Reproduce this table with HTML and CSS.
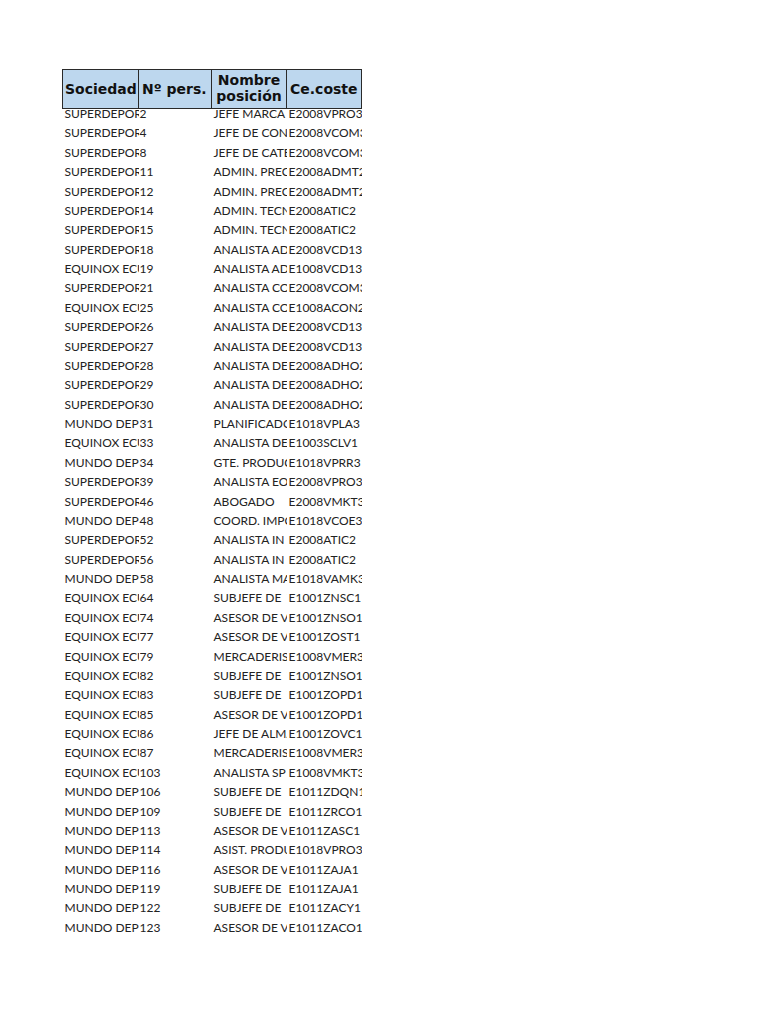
FILE: index.html
```html
<!DOCTYPE html>
<html lang="es">
<head>
<meta charset="utf-8">
<title>Sociedad</title>
<link rel="stylesheet" href="styles.css">
</head>
<body>
<table class="sheet">
<colgroup><col class="c1"><col class="c2"><col class="c3"><col class="c4"></colgroup>
<thead>
<tr class="head">
<th class="h1">Sociedad</th><th class="h2">Nº pers.</th><th class="h3">Nombre<br>posición</th><th class="h4">Ce.coste</th>
</tr>
</thead>
<tbody>
<tr><td class="d1">SUPERDEPORTE</td><td class="d2">2</td><td class="d3">JEFE MARCA</td><td class="d4">E2008VPRO3</td></tr>
<tr><td class="d1">SUPERDEPORTE</td><td class="d2">4</td><td class="d3">JEFE DE CONTABILIDAD</td><td class="d4">E2008VCOM3</td></tr>
<tr><td class="d1">SUPERDEPORTE</td><td class="d2">8</td><td class="d3">JEFE DE CATEGORIA</td><td class="d4">E2008VCOM3</td></tr>
<tr><td class="d1">SUPERDEPORTE</td><td class="d2">11</td><td class="d3">ADMIN. PRECIOS</td><td class="d4">E2008ADMT2</td></tr>
<tr><td class="d1">SUPERDEPORTE</td><td class="d2">12</td><td class="d3">ADMIN. PRECIOS</td><td class="d4">E2008ADMT2</td></tr>
<tr><td class="d1">SUPERDEPORTE</td><td class="d2">14</td><td class="d3">ADMIN. TECNOLOGIA</td><td class="d4">E2008ATIC2</td></tr>
<tr><td class="d1">SUPERDEPORTE</td><td class="d2">15</td><td class="d3">ADMIN. TECNOLOGIA</td><td class="d4">E2008ATIC2</td></tr>
<tr><td class="d1">SUPERDEPORTE</td><td class="d2">18</td><td class="d3">ANALISTA ADM</td><td class="d4">E2008VCD13</td></tr>
<tr><td class="d1">EQUINOX ECUADOR</td><td class="d2">19</td><td class="d3">ANALISTA ADM</td><td class="d4">E1008VCD13</td></tr>
<tr><td class="d1">SUPERDEPORTE</td><td class="d2">21</td><td class="d3">ANALISTA COMERCIAL</td><td class="d4">E2008VCOM3</td></tr>
<tr><td class="d1">EQUINOX ECUADOR</td><td class="d2">25</td><td class="d3">ANALISTA CONTABLE</td><td class="d4">E1008ACON2</td></tr>
<tr><td class="d1">SUPERDEPORTE</td><td class="d2">26</td><td class="d3">ANALISTA DE PRECIOS</td><td class="d4">E2008VCD13</td></tr>
<tr><td class="d1">SUPERDEPORTE</td><td class="d2">27</td><td class="d3">ANALISTA DE PRECIOS</td><td class="d4">E2008VCD13</td></tr>
<tr><td class="d1">SUPERDEPORTE</td><td class="d2">28</td><td class="d3">ANALISTA DE PERSONAL</td><td class="d4">E2008ADHO2</td></tr>
<tr><td class="d1">SUPERDEPORTE</td><td class="d2">29</td><td class="d3">ANALISTA DE PERSONAL</td><td class="d4">E2008ADHO2</td></tr>
<tr><td class="d1">SUPERDEPORTE</td><td class="d2">30</td><td class="d3">ANALISTA DE PERSONAL</td><td class="d4">E2008ADHO2</td></tr>
<tr><td class="d1">MUNDO DEP</td><td class="d2">31</td><td class="d3">PLANIFICADOR</td><td class="d4">E1018VPLA3</td></tr>
<tr><td class="d1">EQUINOX ECUADOR</td><td class="d2">33</td><td class="d3">ANALISTA DE CREDITO</td><td class="d4">E1003SCLV1</td></tr>
<tr><td class="d1">MUNDO DEP</td><td class="d2">34</td><td class="d3">GTE. PRODUCTO</td><td class="d4">E1018VPRR3</td></tr>
<tr><td class="d1">SUPERDEPORTE</td><td class="d2">39</td><td class="d3">ANALISTA EOQ</td><td class="d4">E2008VPRO3</td></tr>
<tr><td class="d1">SUPERDEPORTE</td><td class="d2">46</td><td class="d3">ABOGADO</td><td class="d4">E2008VMKT3</td></tr>
<tr><td class="d1">MUNDO DEP</td><td class="d2">48</td><td class="d3">COORD. IMPORTACIONES</td><td class="d4">E1018VCOE3</td></tr>
<tr><td class="d1">SUPERDEPORTE</td><td class="d2">52</td><td class="d3">ANALISTA IN FRA</td><td class="d4">E2008ATIC2</td></tr>
<tr><td class="d1">SUPERDEPORTE</td><td class="d2">56</td><td class="d3">ANALISTA IN FRA</td><td class="d4">E2008ATIC2</td></tr>
<tr><td class="d1">MUNDO DEP</td><td class="d2">58</td><td class="d3">ANALISTA MARKETING</td><td class="d4">E1018VAMK3</td></tr>
<tr><td class="d1">EQUINOX ECUADOR</td><td class="d2">64</td><td class="d3">SUBJEFE DE  TIENDA</td><td class="d4">E1001ZNSC1</td></tr>
<tr><td class="d1">EQUINOX ECUADOR</td><td class="d2">74</td><td class="d3">ASESOR DE VENTAS</td><td class="d4">E1001ZNSO1</td></tr>
<tr><td class="d1">EQUINOX ECUADOR</td><td class="d2">77</td><td class="d3">ASESOR DE VENTAS</td><td class="d4">E1001ZOST1</td></tr>
<tr><td class="d1">EQUINOX ECUADOR</td><td class="d2">79</td><td class="d3">MERCADERISTA</td><td class="d4">E1008VMER3</td></tr>
<tr><td class="d1">EQUINOX ECUADOR</td><td class="d2">82</td><td class="d3">SUBJEFE DE  TIENDA</td><td class="d4">E1001ZNSO1</td></tr>
<tr><td class="d1">EQUINOX ECUADOR</td><td class="d2">83</td><td class="d3">SUBJEFE DE  TIENDA</td><td class="d4">E1001ZOPD1</td></tr>
<tr><td class="d1">EQUINOX ECUADOR</td><td class="d2">85</td><td class="d3">ASESOR DE VENTAS</td><td class="d4">E1001ZOPD1</td></tr>
<tr><td class="d1">EQUINOX ECUADOR</td><td class="d2">86</td><td class="d3">JEFE DE ALMACEN</td><td class="d4">E1001ZOVC1</td></tr>
<tr><td class="d1">EQUINOX ECUADOR</td><td class="d2">87</td><td class="d3">MERCADERISTA</td><td class="d4">E1008VMER3</td></tr>
<tr><td class="d1">EQUINOX ECUADOR</td><td class="d2">103</td><td class="d3">ANALISTA SP  MKT</td><td class="d4">E1008VMKT3</td></tr>
<tr><td class="d1">MUNDO DEP</td><td class="d2">106</td><td class="d3">SUBJEFE DE  TIENDA</td><td class="d4">E1011ZDQN1</td></tr>
<tr><td class="d1">MUNDO DEP</td><td class="d2">109</td><td class="d3">SUBJEFE DE  TIENDA</td><td class="d4">E1011ZRCO1</td></tr>
<tr><td class="d1">MUNDO DEP</td><td class="d2">113</td><td class="d3">ASESOR DE VENTAS</td><td class="d4">E1011ZASC1</td></tr>
<tr><td class="d1">MUNDO DEP</td><td class="d2">114</td><td class="d3">ASIST. PRODUCTO</td><td class="d4">E1018VPRO3</td></tr>
<tr><td class="d1">MUNDO DEP</td><td class="d2">116</td><td class="d3">ASESOR DE VENTAS</td><td class="d4">E1011ZAJA1</td></tr>
<tr><td class="d1">MUNDO DEP</td><td class="d2">119</td><td class="d3">SUBJEFE DE  TIENDA</td><td class="d4">E1011ZAJA1</td></tr>
<tr><td class="d1">MUNDO DEP</td><td class="d2">122</td><td class="d3">SUBJEFE DE  TIENDA</td><td class="d4">E1011ZACY1</td></tr>
<tr><td class="d1">MUNDO DEP</td><td class="d2">123</td><td class="d3">ASESOR DE VENTAS</td><td class="d4">E1011ZACO1</td></tr>
</tbody>
</table>
</body>
</html>
```
FILE: styles.css
```css
html, body {
  margin: 0;
  padding: 0;
  background: #ffffff;
}
body {
  padding: 69px 0 0 62px;
}
.sheet {
  border-collapse: collapse;
  table-layout: fixed;
  width: 299px;
}
.c1 { width: 76px; }
.c2 { width: 73px; }
.c3 { width: 75px; }
.c4 { width: 75px; }

.head th {
  height: 36px;
  padding: 0;
  background: #bdd7ee;
  border: 1px solid #2a2a2a;
  font-family: "DejaVu Sans", sans-serif;
  font-weight: bold;
  font-size: 14px;
  color: #111111;
  line-height: 16px;
  overflow: hidden;
  white-space: nowrap;
}
.head .h1 { text-align: left; padding-left: 2px; }
.head .h2 { text-align: left; padding-left: 3px; }
.head .h3 { text-align: center; line-height: 16px; padding-bottom: 2px; }
.head .h4 { text-align: left; padding-left: 3px; }

tbody td {
  height: 19.38px;
  padding: 0;
  font-family: Lato, "Liberation Sans", sans-serif;
  font-size: 12px;
  line-height: 10px;
  color: #222222;
  vertical-align: top;
  overflow: hidden;
  white-space: pre;
}
tbody td.d1 { padding-left: 2px; }
tbody td.d2 { padding-left: 1px; }
tbody td.d3 { padding-left: 2px; }
tbody td.d4 { padding-left: 2px; }
```
